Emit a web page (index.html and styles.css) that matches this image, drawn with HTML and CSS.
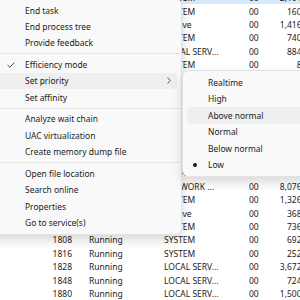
FILE: index.html
```html
<!DOCTYPE html>
<html>
<head>
<meta charset="utf-8">
<link rel="stylesheet" href="styles.css">
</head>
<body>
<div class="table">
  <div class="row selected"><span></span><span class="pid"></span><span class="st"></span><span>SYSTEM</span><span>00</span><span class="mem">2,104 K</span></div>
  <div class="row"><span></span><span class="pid"></span><span class="st"></span><span>SYSTEM</span><span>00</span><span class="mem">160 K</span></div>
  <div class="row"><span></span><span class="pid"></span><span class="st"></span><span>Octave</span><span>00</span><span class="mem">1,416 K</span></div>
  <div class="row"><span></span><span class="pid"></span><span class="st"></span><span>SYSTEM</span><span>00</span><span class="mem">740 K</span></div>
  <div class="row"><span></span><span class="pid"></span><span class="st"></span><span>LOCAL SERV...</span><span>00</span><span class="mem">884 K</span></div>
  <div class="row"><span></span><span class="pid"></span><span class="st"></span><span>SYSTEM</span><span>00</span><span class="mem">8 K</span></div>
  <div class="row"><span></span><span class="pid"></span><span class="st"></span><span></span><span></span><span class="mem"></span></div>
  <div class="row"><span></span><span class="pid"></span><span class="st"></span><span></span><span></span><span class="mem"></span></div>
  <div class="row"><span></span><span class="pid"></span><span class="st"></span><span></span><span></span><span class="mem"></span></div>
  <div class="row"><span></span><span class="pid"></span><span class="st"></span><span></span><span></span><span class="mem"></span></div>
  <div class="row"><span></span><span class="pid"></span><span class="st"></span><span></span><span></span><span class="mem"></span></div>
  <div class="row"><span></span><span class="pid"></span><span class="st"></span><span></span><span></span><span class="mem"></span></div>
  <div class="row"><span></span><span class="pid"></span><span class="st"></span><span></span><span></span><span class="mem"></span></div>
  <div class="row"><span></span><span class="pid"></span><span class="st"></span><span>LOCAL SERV...</span><span>00</span><span class="mem">3,120 K</span></div>
  <div class="row"><span></span><span class="pid"></span><span class="st"></span><span>NETWORK ...</span><span>00</span><span class="mem">8,076 K</span></div>
  <div class="row"><span></span><span class="pid"></span><span class="st"></span><span>SYSTEM</span><span>00</span><span class="mem">1,326 K</span></div>
  <div class="row"><span></span><span class="pid"></span><span class="st"></span><span>Octave</span><span>00</span><span class="mem">368 K</span></div>
  <div class="row"><span></span><span class="pid"></span><span class="st"></span><span>SYSTEM</span><span>00</span><span class="mem">736 K</span></div>
  <div class="row"><span></span><span class="pid">1808</span><span class="st">Running</span><span>SYSTEM</span><span>00</span><span class="mem">692 K</span></div>
  <div class="row"><span></span><span class="pid">1816</span><span class="st">Running</span><span>SYSTEM</span><span>00</span><span class="mem">252 K</span></div>
  <div class="row"><span></span><span class="pid">1828</span><span class="st">Running</span><span>LOCAL SERV...</span><span>00</span><span class="mem">3,672 K</span></div>
  <div class="row"><span></span><span class="pid">1848</span><span class="st">Running</span><span>LOCAL SERV...</span><span>00</span><span class="mem">724 K</span></div>
  <div class="row"><span></span><span class="pid">1880</span><span class="st">Running</span><span>LOCAL SERV...</span><span>00</span><span class="mem">1,500 K</span></div>
</div>

<div class="menu main-menu">
  <div class="item"><span class="ico"></span><span>End task</span></div>
  <div class="item"><span class="ico"></span><span>End process tree</span></div>
  <div class="item"><span class="ico"></span><span>Provide feedback</span></div>
  <div class="sep"></div>
  <div class="item"><span class="ico"><svg width="8" height="6" viewBox="0 0 8 6"><path d="M0.6 3.1 L2.8 5.2 L7.4 0.6" fill="none" stroke="#333" stroke-width="0.9"/></svg></span><span>Efficiency mode</span></div>
  <div class="item hover"><span class="ico"></span><span>Set priority</span><svg class="chev" width="4" height="7" viewBox="0 0 4 7"><path d="M0.5 0.5 L3.3 3.5 L0.5 6.5" fill="none" stroke="#444" stroke-width="0.9"/></svg></div>
  <div class="item"><span class="ico"></span><span>Set affinity</span></div>
  <div class="sep"></div>
  <div class="item"><span class="ico"></span><span>Analyze wait chain</span></div>
  <div class="item"><span class="ico"></span><span>UAC virtualization</span></div>
  <div class="item"><span class="ico"></span><span>Create memory dump file</span></div>
  <div class="sep"></div>
  <div class="item"><span class="ico"></span><span>Open file location</span></div>
  <div class="item"><span class="ico"></span><span>Search online</span></div>
  <div class="item"><span class="ico"></span><span>Properties</span></div>
  <div class="item"><span class="ico"></span><span>Go to service(s)</span></div>
</div>

<div class="menu sub-menu">
  <div class="item"><span class="ico"></span><span>Realtime</span></div>
  <div class="item"><span class="ico"></span><span>High</span></div>
  <div class="item hover"><span class="ico"></span><span>Above normal</span></div>
  <div class="item"><span class="ico"></span><span>Normal</span></div>
  <div class="item"><span class="ico"></span><span>Below normal</span></div>
  <div class="item"><span class="ico"><span class="dot"></span></span><span>Low</span></div>
</div>
</body>
</html>
```

FILE: styles.css
```css
html, body {
  margin: 0;
  padding: 0;
  width: 300px;
  height: 300px;
  overflow: hidden;
  background: #ffffff;
  font-family: "Noto Sans", "Open Sans", sans-serif;
  font-size: 8.5px;
  color: #1b1b1b;
}
body {
  position: relative;
}
.table {
  margin-top: -9.2px;
  display: flex;
  flex-direction: column;
}
.row {
  display: grid;
  grid-template-columns: 40px 32px 92px 85px 20px 40px;
  height: 13.47px;
  align-items: center;
  white-space: nowrap;
}
.row span {
  overflow: hidden;
}
.row.selected {
  background: #d6e9fa;
}
.pid {
  text-align: right;
}
.st {
  padding-left: 17px;
}
.mem {
  text-align: right;
}

.menu {
  position: absolute;
  background: #f9f9f9;
  border: 1px solid #e3e3e3;
  border-radius: 7px;
  box-shadow: 0 5px 12px rgba(0, 0, 0, 0.16);
  padding: 3px 0 3px;
  box-sizing: border-box;
  font-size: 8.45px;
}
.main-menu {
  left: -11px;
  top: -2px;
  width: 193px;
}
.sub-menu {
  left: 182px;
  top: 70px;
  width: 130px;
}
.item {
  display: flex;
  align-items: center;
  height: 16.35px;
  margin: 0 4px;
  border-radius: 4px;
  white-space: nowrap;
}
.item.hover {
  background: #efefef;
}
.main-menu .ico {
  width: 31px;
  padding-left: 13px;
  box-sizing: border-box;
  display: flex;
  align-items: center;
}
.sub-menu .item {
  height: 16.5px;
}
.sub-menu .ico {
  width: 21px;
  padding-left: 6px;
  box-sizing: border-box;
  display: flex;
  align-items: center;
}
.dot {
  width: 4px;
  height: 4px;
  border-radius: 50%;
  background: #1b1b1b;
}
.chev {
  margin-left: auto;
  margin-right: 6px;
}
.sep {
  height: 1px;
  margin: 2.2px 0;
  background: #e6e6e6;
}
```
